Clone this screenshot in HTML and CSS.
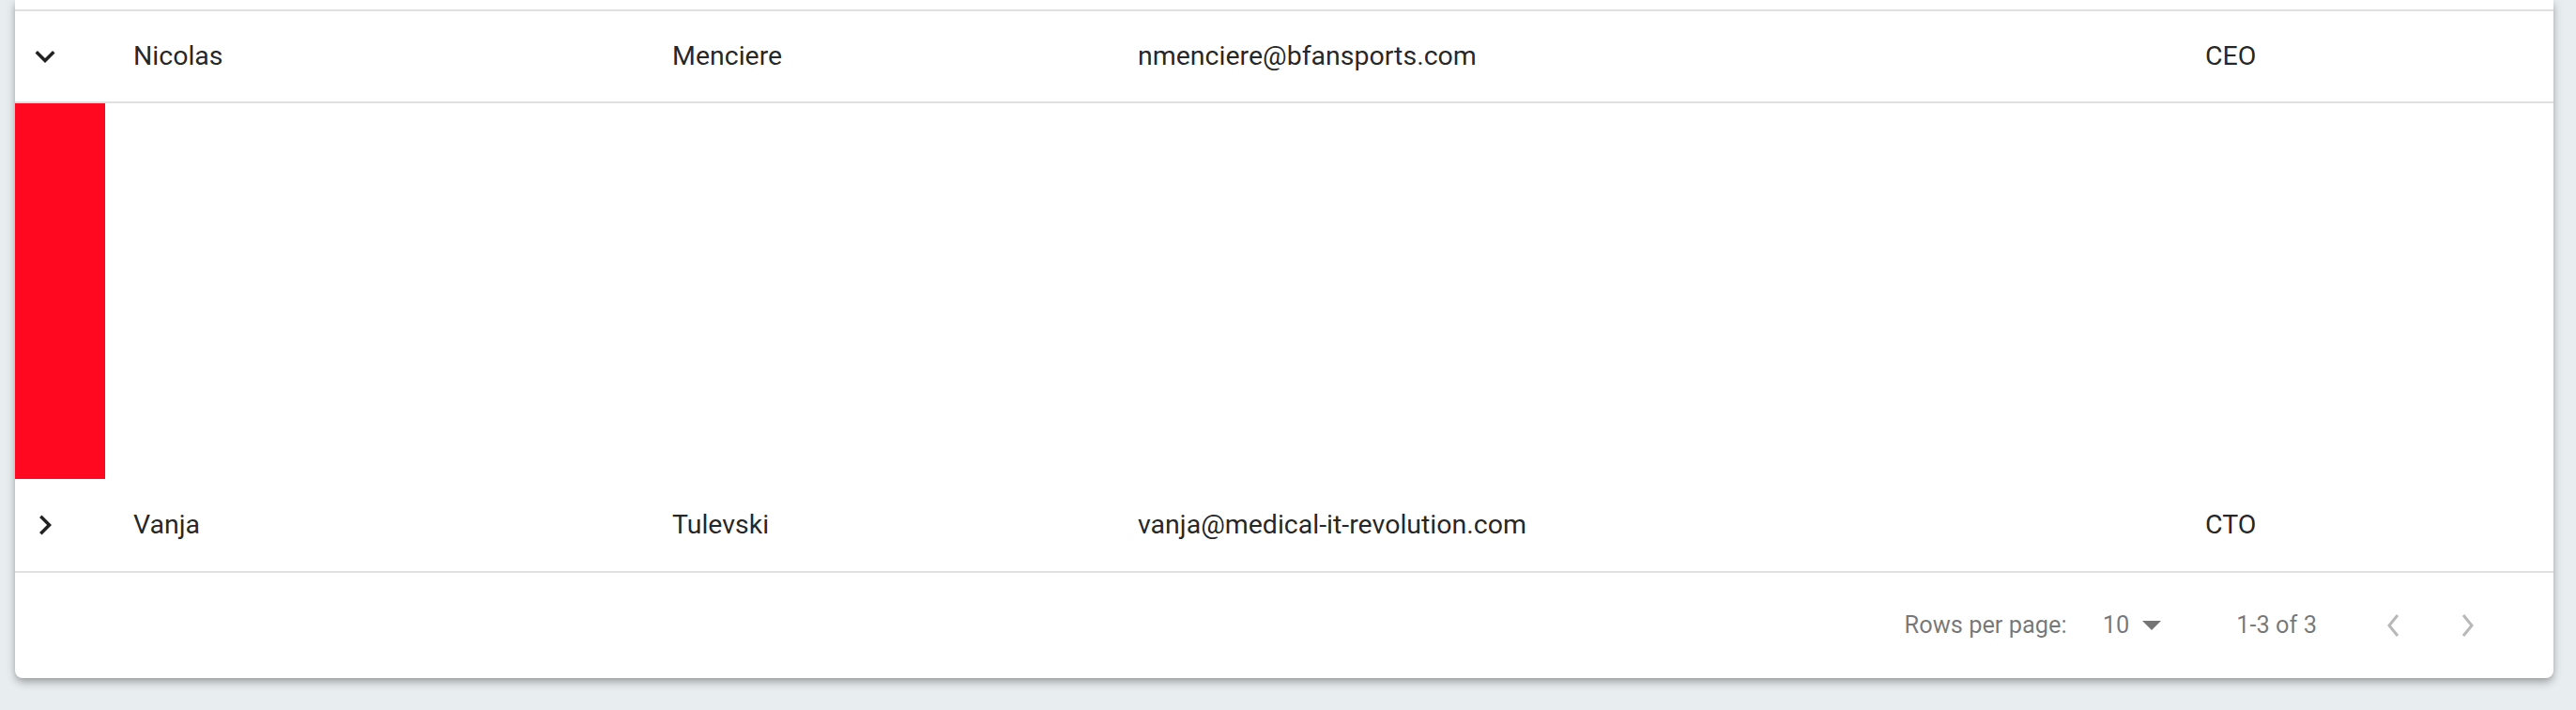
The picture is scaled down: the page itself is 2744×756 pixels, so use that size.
FILE: index.html
```html
<!DOCTYPE html>
<html lang="en">
<head>
<meta charset="utf-8">
<title>Users table</title>
<link rel="stylesheet" href="styles.css">
</head>
<body>
<div class="page">
  <div class="card">
    <div class="head-stub"></div>

    <div class="row row-first">
      <div class="cell cell-icon">
        <svg class="toggle" viewBox="0 0 24 24" width="42" height="42"><path d="M16.59 8.59L12 13.17 7.41 8.59 6 10l6 6 6-6z"/></svg>
      </div>
      <div class="cell">Nicolas</div>
      <div class="cell">Menciere</div>
      <div class="cell">nmenciere@bfansports.com</div>
      <div class="cell">CEO</div>
    </div>

    <div class="detail">
      <div class="detail-block"></div>
    </div>

    <div class="row row-last">
      <div class="cell cell-icon">
        <svg class="toggle" viewBox="0 0 24 24" width="42" height="42"><path d="M10 6L8.59 7.41 13.17 12l-4.58 4.59L10 18l6-6z"/></svg>
      </div>
      <div class="cell">Vanja</div>
      <div class="cell">Tulevski</div>
      <div class="cell">vanja@medical-it-revolution.com</div>
      <div class="cell">CTO</div>
    </div>

    <div class="footer">
      <span class="label">Rows per page:</span>
      <span class="select">
        <span class="select-value">10</span>
        <svg class="caret" viewBox="0 0 20 10" width="20" height="10"><polygon points="0,0 20,0 10,10"/></svg>
      </span>
      <span class="range">1-3 of 3</span>
      <span class="nav nav-prev">
        <svg viewBox="0 0 14 26" width="14" height="26"><polyline points="12,2 3,13 12,24"/></svg>
      </span>
      <span class="nav nav-next">
        <svg viewBox="0 0 14 26" width="14" height="26"><polyline points="2,2 11,13 2,24"/></svg>
      </span>
    </div>
  </div>
</div>
</body>
</html>
```

FILE: styles.css
```css
html, body {
  margin: 0;
  padding: 0;
  background: #e8edf0;
  height: 100%;
  overflow: hidden;
}

.page {
  padding: 0 24px 0 16px;
  font-family: Roboto, "Liberation Sans", Arial, sans-serif;
  color: rgba(0, 0, 0, 0.87);
}

.card {
  background: #ffffff;
  border-radius: 0 0 8px 8px;
  box-shadow: 0 3px 7px -2px rgba(0, 0, 0, 0.22),
              0 6px 9px 0 rgba(0, 0, 0, 0.14),
              0 2px 14px 0 rgba(0, 0, 0, 0.1);
}

.head-stub {
  height: 10px;
  border-bottom: 2px solid #e0e0e0;
}

.row {
  display: grid;
  grid-template-columns: 96px 574px 496px 1137px 401px;
  align-items: center;
  border-bottom: 2px solid #e0e0e0;
  font-size: 28.5px;
  line-height: 1;
}

.row-first {
  height: 96px;
}

.row-last {
  height: 98px;
}

.cell {
  padding-left: 30px;
  white-space: nowrap;
}

.cell-icon {
  padding-left: 11px;
  display: flex;
  align-items: center;
}

.toggle {
  display: block;
  fill: rgba(0, 0, 0, 0.87);
}

.detail {
  height: 400px;
}

.detail-block {
  width: 96px;
  height: 400px;
  background: #ff0820;
}

.footer {
  height: 112px;
  display: flex;
  align-items: center;
  justify-content: flex-end;
  padding-right: 84px;
  font-size: 25.4px;
  color: rgba(0, 0, 0, 0.54);
  line-height: 1;
}

.select {
  display: flex;
  align-items: center;
  margin-left: 38px;
}

.caret {
  display: block;
  margin-left: 14px;
  fill: rgba(0, 0, 0, 0.54);
}

.range {
  margin-left: 80px;
}

.nav {
  display: flex;
  align-items: center;
}

.nav svg {
  display: block;
  fill: none;
  stroke: rgba(0, 0, 0, 0.28);
  stroke-width: 3;
}

.nav-prev {
  margin-left: 74px;
}

.nav-next {
  margin-left: 66px;
}
```
